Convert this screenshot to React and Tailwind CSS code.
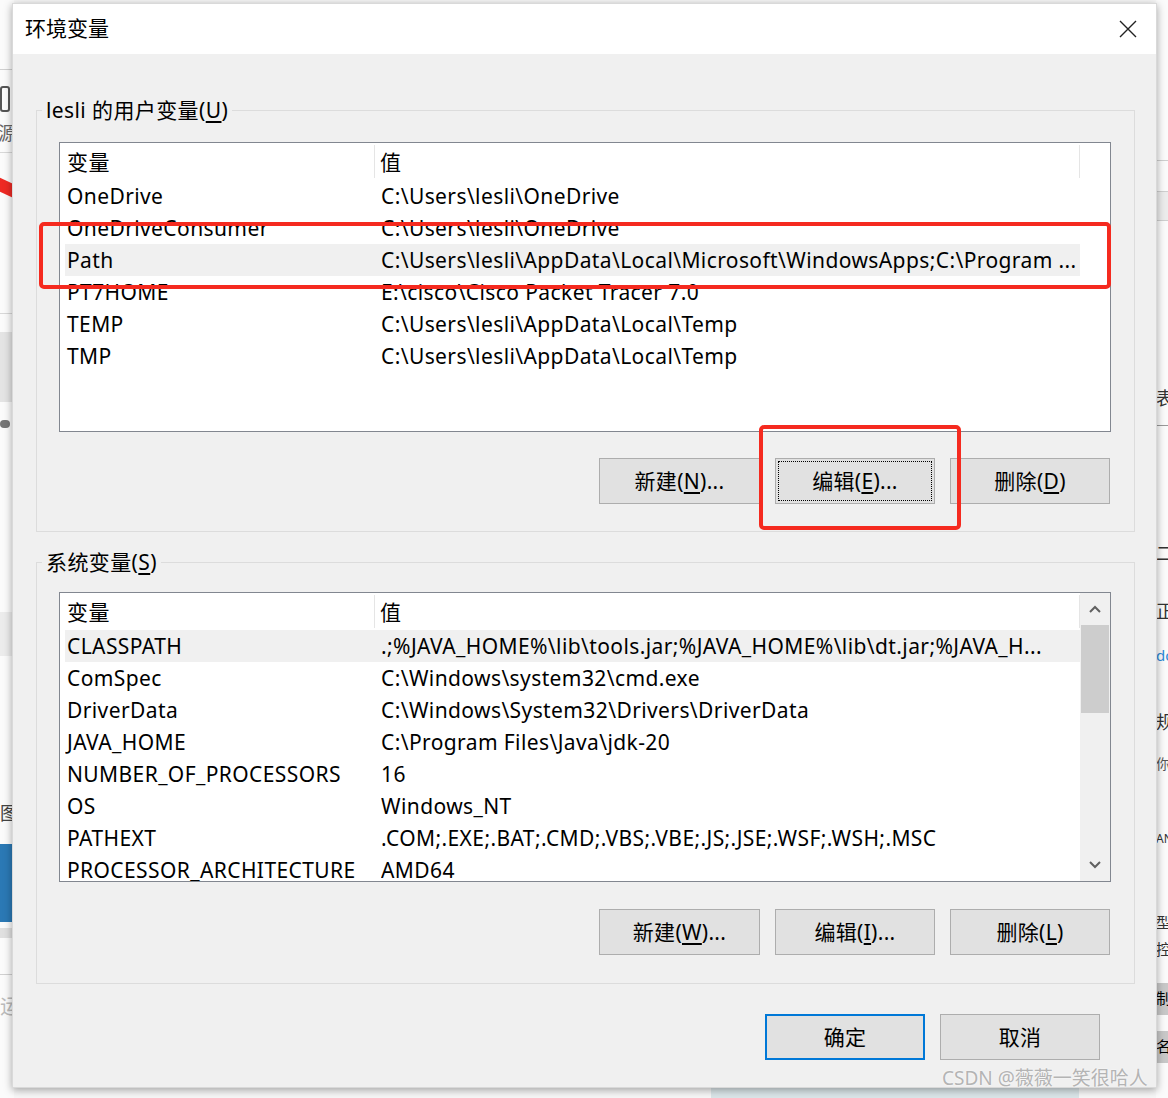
import React from 'react';

const userVars = [
  ['OneDrive', 'C:\\Users\\lesli\\OneDrive'],
  ['OneDriveConsumer', 'C:\\Users\\lesli\\OneDrive'],
  ['Path', 'C:\\Users\\lesli\\AppData\\Local\\Microsoft\\WindowsApps;C:\\Program ...'],
  ['PT7HOME', 'E:\\cisco\\Cisco Packet Tracer 7.0'],
  ['TEMP', 'C:\\Users\\lesli\\AppData\\Local\\Temp'],
  ['TMP', 'C:\\Users\\lesli\\AppData\\Local\\Temp'],
];

const sysVars = [
  ['CLASSPATH', '.;%JAVA_HOME%\\lib\\tools.jar;%JAVA_HOME%\\lib\\dt.jar;%JAVA_H...'],
  ['ComSpec', 'C:\\Windows\\system32\\cmd.exe'],
  ['DriverData', 'C:\\Windows\\System32\\Drivers\\DriverData'],
  ['JAVA_HOME', 'C:\\Program Files\\Java\\jdk-20'],
  ['NUMBER_OF_PROCESSORS', '16'],
  ['OS', 'Windows_NT'],
  ['PATHEXT', '.COM;.EXE;.BAT;.CMD;.VBS;.VBE;.JS;.JSE;.WSF;.WSH;.MSC'],
  ['PROCESSOR_ARCHITECTURE', 'AMD64'],
];

// text with an underlined access key, e.g. 新建(N)...
const Label = ({ pre, k, post }) => (
  <span>
    {pre}(<span className="underline underline-offset-[3px]">{k}</span>){post}
  </span>
);

const Btn = ({ children, focus, primary, w = 'w-[160px]' }) => (
  <button
    className={`${w} h-[46px] bg-[#e1e1e1] text-[21px] tracking-[0.3px] text-black flex items-center justify-center pt-[1px] ${
      primary ? 'border-2 border-[#0078d7]' : 'border border-[#adadad]'
    } ${focus ? 'outline-1 outline-dotted outline-black outline-offset-[-4px]' : ''}`}
  >
    {children}
  </button>
);

const Header = () => (
  <div className="flex h-[37px] ml-[5px] w-[1015px] shrink-0">
    <div className="w-[310px] my-[2px] pl-[2px] pt-[2px] flex items-center border-r border-[#e5e5e5]">变量</div>
    <div className="w-[705px] my-[2px] pl-[5px] pt-[2px] flex items-center border-r border-[#e5e5e5]">值</div>
  </div>
);

const Row = ({ name, value, selected }) => (
  <div className={`flex h-[32px] ml-[5px] w-[1015px] shrink-0 items-center pt-[2px] whitespace-nowrap ${selected ? 'bg-[#f0f0f0]' : ''}`}>
    <div className="w-[316px] pl-[2px] overflow-hidden">{name}</div>
    <div className="flex-1 overflow-hidden">{value}</div>
  </div>
);

const Chevron = ({ down }) => (
  <svg width="14" height="10" viewBox="0 0 14 10" className={down ? 'rotate-180' : ''}>
    <path d="M2 8 L7 3 L12 8" fill="none" stroke="#606060" strokeWidth="2" />
  </svg>
);

export default function App() {
  return (
    <div
      className="relative w-[1168px] h-[1098px] overflow-hidden bg-[#f7f7f7] text-black"
      style={{ fontFamily: '"Noto Sans", "Noto Sans CJK SC", sans-serif' }}
    >
      {/* bits of the windows behind the dialog */}
      <div className="absolute left-0 top-0 w-[14px] h-[1098px] bg-[#fbfbfb]">
        <div className="h-[70px] border-b border-[#d0d0d0]" />
        <div className="mt-[16px] w-[10px] h-[26px] border-2 border-[#555] rounded-[3px]" />
        <div className="mt-[12px] text-[18px] text-[#666] leading-none -ml-[2px]">源</div>
        <div className="mt-[10px] border-b border-[#d8d8d8]" />
        <div className="mt-[28px] w-[14px] h-[14px] bg-[#ee2a24] skew-y-[25deg]" />
        <div className="mt-[118px] border-b border-[#d8d8d8]" />
        <div className="mt-[18px] h-[70px] bg-[#e4e4e4]" />
        <div className="mt-[18px] w-[10px] h-[8px] bg-[#777] rounded-full" />
        <div className="mt-[184px] h-[44px] bg-[#ececec]" />
        <div className="mt-[148px] text-[18px] text-[#444] leading-none">图</div>
        <div className="mt-[22px] h-[78px] bg-[#2b79b5]" />
        <div className="mt-[6px] h-[10px] bg-[#e0e0e0]" />
        <div className="mt-[36px] border-b border-[#d0d0d0]" />
        <div className="mt-[22px] text-[20px] text-[#bbb] leading-none">运</div>
      </div>
      <div className="absolute left-[1156px] top-0 w-[12px] h-[1098px] bg-[#fbfbfb] text-[18px] leading-none">
        <div className="mt-[160px] border-b border-[#cfcfcf]" />
        <div className="mt-[30px] h-[30px] border-y border-[#cfcfcf] bg-[#ececec]" />
        <div className="mt-[168px] text-[#333]">表</div>
        <div className="mt-[18px] border-b border-[#999]" />
        <div className="mt-[118px] text-[#333]">二</div>
        <div className="mt-[40px] text-[#333]">正</div>
        <div className="mt-[28px] text-[#2b88d8] text-[15px]">do</div>
        <div className="mt-[50px] text-[#333]">规</div>
        <div className="mt-[26px] text-[#555] text-[14px]">你</div>
        <div className="mt-[62px] text-[#333] text-[12px]">AN</div>
        <div className="mt-[70px] text-[#333] text-[15px]">型</div>
        <div className="mt-[12px] text-[#333] text-[15px]">控</div>
        <div className="mt-[26px] h-[32px] bg-[#c8c8c8] text-[15px] pt-[8px]">制</div>
        <div className="mt-[16px] h-[32px] bg-[#c8c8c8] text-[15px] pt-[8px]">名</div>
      </div>
      <div className="absolute left-[711px] top-[1088px] w-[368px] h-[10px] bg-[#dbe6e9]" />

      {/* dialog */}
      <div className="relative ml-[12px] mt-[3px] w-[1145px] h-[1085px] flex flex-col shadow-[0_2px_8px_rgba(0,0,0,0.35)] border border-[#d9d9d9]">
        <div className="h-[50px] bg-white flex items-center justify-between pl-[12px] pr-[19px] shrink-0">
          <span className="text-[21px]">环境变量</span>
          <svg width="18" height="18" viewBox="0 0 18 18">
            <path d="M1 1 L17 17 M17 1 L1 17" stroke="#222" strokeWidth="1.4" />
          </svg>
        </div>

        <div className="flex-1 bg-[#f0f0f0] flex flex-col pl-[23px] text-[21px] tracking-[0.4px]">
          <fieldset className="mt-[42px] w-[1099px] border border-[#dcdcdc] pb-[27px]">
            <legend className="ml-[5px] px-[4px] leading-[28px]">
              lesli 的用户变量(<span className="underline underline-offset-[3px]">U</span>)
            </legend>
            <div className="mt-[18px] ml-[22px] w-[1052px] h-[290px] bg-white border border-[#828790] flex flex-col overflow-hidden">
              <Header />
              {userVars.map(([n, v]) => (
                <Row key={n} name={n} value={v} selected={n === 'Path'} />
              ))}
            </div>
            <div className="mt-[26px] ml-[562px] flex gap-[15px]">
              <Btn w="w-[161px]"><Label pre="新建" k="N" post="..." /></Btn>
              <Btn focus><Label pre="编辑" k="E" post="..." /></Btn>
              <Btn><Label pre="删除" k="D" post="" /></Btn>
            </div>
          </fieldset>

          <fieldset className="mt-[16px] w-[1099px] border border-[#dcdcdc] pb-[28px]">
            <legend className="ml-[5px] px-[4px] leading-[28px]">
              系统变量(<span className="underline underline-offset-[3px]">S</span>)
            </legend>
            <div className="mt-[16px] ml-[22px] w-[1052px] h-[290px] bg-white border border-[#828790] flex overflow-hidden">
              <div className="w-[1020px] flex flex-col overflow-hidden">
                <Header />
                {sysVars.map(([n, v]) => (
                  <Row key={n} name={n} value={v} selected={n === 'CLASSPATH'} />
                ))}
              </div>
              <div className="w-[30px] bg-[#f0f0f0] flex flex-col items-center">
                <div className="h-[32px] flex items-center justify-center"><Chevron /></div>
                <div className="w-[28px] h-[88px] bg-[#cdcdcd]" />
                <div className="flex-1" />
                <div className="h-[32px] flex items-center justify-center"><Chevron down /></div>
              </div>
            </div>
            <div className="mt-[27px] ml-[562px] flex gap-[15px]">
              <Btn w="w-[161px]"><Label pre="新建" k="W" post="..." /></Btn>
              <Btn><Label pre="编辑" k="I" post="..." /></Btn>
              <Btn><Label pre="删除" k="L" post="" /></Btn>
            </div>
          </fieldset>

          <div className="mt-[30px] ml-[729px] flex gap-[15px]">
            <Btn primary>确定</Btn>
            <Btn>取消</Btn>
          </div>
        </div>

        {/* red annotation boxes */}
        <div className="absolute left-[26px] top-[218px] w-[1072px] h-[67px] border-4 border-[#f52a1f] rounded-[5px]" />
        <div className="absolute left-[746px] top-[421px] w-[202px] h-[105px] border-4 border-[#f52a1f] rounded-[5px]" />

        <div className="absolute left-[929px] top-[1060px] text-[19px] text-[#b4b4b4] whitespace-nowrap [text-shadow:0_0_2px_white]">
          CSDN @薇薇一笑很哈人
        </div>
      </div>
    </div>
  );
}
